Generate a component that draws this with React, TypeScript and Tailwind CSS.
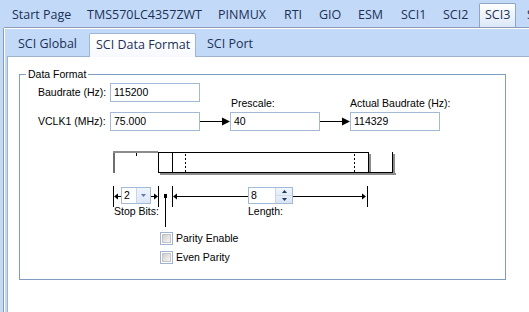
import React from 'react';

const topTabs = [
  { label: 'Start Page', cls: 'w-[75px]' },
  { label: 'TMS570LC4357ZWT', cls: 'w-[131px]' },
  { label: 'PINMUX', cls: 'w-[66px]' },
  { label: 'RTI', cls: 'w-[35px]' },
  { label: 'GIO', cls: 'w-[39px]' },
  { label: 'ESM', cls: 'w-[43px]' },
  { label: 'SCI1', cls: 'w-[42px]' },
  { label: 'SCI2', cls: 'w-[36px]' },
];

function Field({ value, cls }: { value: string; cls: string }) {
  return (
    <div className={`${cls} h-[19px] shrink-0 border border-[#a4b9d6] bg-white pl-[3px] flex items-center leading-none text-black`}>
      {value}
    </div>
  );
}

function Arrow() {
  // arrow between the clock / prescale / baud fields
  return (
    <svg width="30" height="19" className="block shrink-0">
      <rect x="0" y="9" width="23" height="1" fill="#000" />
      <path d="M22 5.5L30 9.5L22 13.5Z" fill="#000" />
    </svg>
  );
}

function CheckBox({ label }: { label: string }) {
  return (
    <div className="h-[13px] flex items-center gap-[3px]">
      <span className="w-[13px] h-[13px] border border-[#9fb3d1] bg-white flex items-center justify-center">
        <span className="w-[9px] h-[9px] bg-linear-to-br from-[#cfcfcf] to-[#f6f6f6] border border-[#c4c4c4]" />
      </span>
      <span className="leading-[13px]">{label}</span>
    </div>
  );
}

function FrameDiagram() {
  return (
    <div className="relative h-[84px] w-[485px]">
      <svg width="485" height="84" className="block">
        {/* idle line */}
        <rect x="93" y="7" width="2" height="21" fill="#6e6e6e" />
        <rect x="93" y="6" width="45" height="2" fill="#8c8c8c" />
        <rect x="116" y="8" width="1" height="3" fill="#000" />
        {/* shadows */}
        <rect x="140" y="28" width="236" height="2" fill="#8c8c8c" />
        <rect x="349" y="9" width="2" height="18" fill="#8c8c8c" />
        <rect x="373" y="9" width="2" height="19" fill="#8c8c8c" />
        {/* frame */}
        <rect x="138" y="7" width="211" height="1" fill="#000" />
        <rect x="138" y="27" width="235" height="1" fill="#000" />
        <rect x="138" y="7" width="1" height="21" fill="#000" />
        <rect x="152" y="7" width="1" height="21" fill="#000" />
        <rect x="348" y="7" width="1" height="21" fill="#000" />
        <rect x="372" y="7" width="1" height="21" fill="#000" />
        <line x1="165.5" y1="9" x2="165.5" y2="27" stroke="#000" strokeDasharray="2 2" />
        <line x1="334.5" y1="9" x2="334.5" y2="27" stroke="#000" strokeDasharray="2 2" />
        {/* dimension ticks */}
        <rect x="93" y="41" width="1" height="21" fill="#000" />
        <rect x="138" y="41" width="1" height="21" fill="#000" />
        <rect x="152" y="41" width="1" height="21" fill="#000" />
        <rect x="347" y="41" width="1" height="21" fill="#000" />
        {/* stop bits arrows */}
        <path d="M94 51.5L98 48.5L98 54.5Z" fill="#000" />
        <rect x="98" y="51" width="3" height="1" fill="#000" />
        <rect x="131" y="51" width="3" height="1" fill="#000" />
        <path d="M138 51.5L134 48.5L134 54.5Z" fill="#000" />
        {/* parity marker */}
        <rect x="144" y="49" width="3" height="4" fill="#000" />
        <rect x="145" y="51" width="1" height="31" fill="#000" />
        {/* length arrows */}
        <path d="M153 51.5L157 48.5L157 54.5Z" fill="#000" />
        <rect x="157" y="51" width="71" height="1" fill="#000" />
        <rect x="273" y="51" width="69" height="1" fill="#000" />
        <path d="M346 51.5L342 48.5L342 54.5Z" fill="#000" />
      </svg>

      <div className="absolute left-[101px] top-[42px] w-[30px] h-[17px] flex border border-[#a4b9d6] bg-white">
        <div className="flex-1 pl-[2px] flex items-center leading-none">2</div>
        <div className="w-[14px] border-l border-[#c6d5e9] bg-linear-to-b from-[#eef4fc] to-[#dce7f6] flex items-center justify-center">
          <svg width="5" height="3" className="block">
            <path d="M0 0H5L2.5 3Z" fill="#5b7cad" />
          </svg>
        </div>
      </div>

      <div className="absolute left-[228px] top-[42px] w-[45px] h-[17px] flex border border-[#a4b9d6] bg-white">
        <div className="flex-1 pl-[2px] flex items-center leading-none">8</div>
        <div className="w-[17px] border-l border-[#c6d5e9] flex flex-col">
          <div className="flex-1 bg-linear-to-b from-[#f1f6fd] to-[#e1ebf8] flex items-center justify-center border-b border-[#d3deed]">
            <svg width="5" height="3" className="block">
              <path d="M0 3H5L2.5 0Z" fill="#1f3661" />
            </svg>
          </div>
          <div className="flex-1 bg-linear-to-b from-[#e6eef9] to-[#d9e5f5] flex items-center justify-center">
            <svg width="5" height="3" className="block">
              <path d="M0 0H5L2.5 3Z" fill="#1f3661" />
            </svg>
          </div>
        </div>
      </div>

      <span className="absolute left-[94px] top-[60px] leading-[13px]">Stop Bits:</span>
      <span className="absolute left-[228px] top-[60px] leading-[13px]">Length:</span>
    </div>
  );
}

export default function App() {
  return (
    <div className="w-[529px] h-[312px] overflow-hidden bg-[#c2daf7] font-['Open_Sans',sans-serif] text-[12.5px] text-[#1c3057]">
      {/* Top document tabs */}
      <div className="h-[27px] flex items-end pl-[12px] whitespace-nowrap overflow-hidden">
        {topTabs.map((t) => (
          <div key={t.label} className={`${t.cls} h-[24px] shrink-0 flex items-center`}>
            {t.label}
          </div>
        ))}
        <div className="w-[37px] h-[24px] shrink-0 pl-[5px] flex items-center rounded-t-[2px] border border-b-0 border-[#8ea6c6] bg-linear-to-b from-white to-[#dbe8f8]">
          SCI3
        </div>
        <div className="ml-[11px] h-[24px] shrink-0 flex items-center">SCI4</div>
      </div>

      {/* Inner tab control */}
      <div className="ml-[3px] h-[285px] border-l border-t border-[#8a9ab2] rounded-tl-[3px]">
        <div className="h-full border-l border-t border-white flex flex-col">
          <div className="h-[27px] shrink-0 flex items-end pl-[13px] whitespace-nowrap">
            <div className="w-[71px] h-[24px] shrink-0 flex items-center">SCI Global</div>
            <div className="relative top-[1px] z-10 w-[107px] h-[24px] shrink-0 pl-[6px] flex items-center border border-b-0 border-[#9fb5d2] rounded-t-[2px] bg-linear-to-b from-white to-[#f6f9fe]">
              SCI Data Format
            </div>
            <div className="ml-[11px] h-[24px] shrink-0 flex items-center">SCI Port</div>
          </div>

          <div className="flex-1 ml-[2px] border-l border-t border-[#9db2cd] bg-white pt-[17px] font-['Liberation_Sans',Arial,sans-serif] text-[10.5px] text-black">
            <div className="relative ml-[11px] w-[487px] h-[206px] border border-[#7f9dc2]">
              <span className="absolute left-[6px] top-[-7px] px-[2px] bg-white leading-[13px]">Data Format</span>

              <div className="pl-[18px] pt-[8px] flex items-start">
                <div className="w-[72px] h-[19px] shrink-0 flex items-center">Baudrate (Hz):</div>
                <Field value="115200" cls="w-[90px]" />
                <div className="w-[30px] shrink-0" />
                <div className="w-[90px] shrink-0 pt-[14px] pl-[1px] leading-[13px]">Prescale:</div>
                <div className="w-[30px] shrink-0" />
                <div className="shrink-0 pt-[14px] leading-[13px] whitespace-nowrap">Actual Baudrate (Hz):</div>
              </div>

              <div className="pl-[18px] mt-[2px] flex items-center">
                <div className="w-[72px] h-[19px] shrink-0 flex items-center">VCLK1 (MHz):</div>
                <Field value="75.000" cls="w-[90px]" />
                <Arrow />
                <Field value="40" cls="w-[90px]" />
                <Arrow />
                <Field value="114329" cls="w-[90px]" />
              </div>

              <div className="mt-[14px]">
                <FrameDiagram />
              </div>

              <div className="mt-[3px] pl-[140px] flex flex-col gap-[6px]">
                <CheckBox label="Parity Enable" />
                <CheckBox label="Even Parity" />
              </div>
            </div>
          </div>
        </div>
      </div>
    </div>
  );
}
